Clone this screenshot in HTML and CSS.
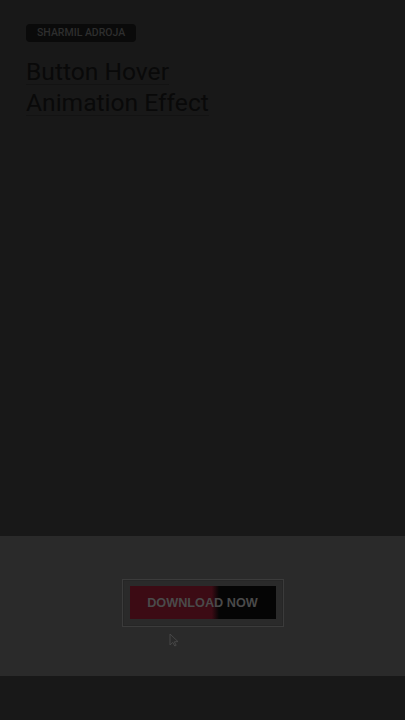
FILE: index.html
```html
<!DOCTYPE html>
<html lang="en">
<head>
    <meta charset="UTF-8">
    <meta name="viewport" content="width=device-width, initial-scale=1.0">
    <title>Button Hover Animation Effect</title>
    <link rel="stylesheet" href="styles.css">
</head>
<body>
    <div class="shot-header">
        <div class="author-row">
            <span class="author-badge">SHARMIL ADROJA</span>
        </div>
        <h1 class="shot-title"><a href="#">Button Hover Animation Effect</a></h1>
    </div>

    <div class="shot-media">
        <div class="btn-frame">
            <a href="#" class="download-btn">DOWNLOAD NOW</a>
        </div>
        <svg class="cursor" width="10" height="14" viewBox="0 0 10 14">
            <path d="M1 1 L1 12 L3.8 9.4 L5.8 13 L7.2 12.3 L5.3 8.8 L9 8.6 Z" fill="#2a2a2a" stroke="#474747" stroke-width="1"/>
        </svg>
    </div>

    <div class="shot-footer"></div>
</body>
</html>
```

FILE: styles.css
```css
* {
    margin: 0;
    padding: 0;
    box-sizing: border-box;
}

body {
    font-family: Roboto, "Liberation Sans", sans-serif;
    background: #181818;
    height: 720px;
    display: flex;
    flex-direction: column;
    overflow: hidden;
}

.shot-header {
    flex: 1;
    padding: 24px 26px 0;
}

.author-row {
    display: flex;
}

.author-badge {
    height: 18px;
    line-height: 18px;
    padding: 0 11px;
    background: #0a0a0a;
    color: #2e2e2e;
    font-size: 10.5px;
    font-weight: 500;
    border-radius: 4px;
}

.shot-title {
    margin-top: 14px;
    font-size: 24.6px;
    font-weight: 400;
    line-height: 31px;
    width: 220px;
}

.shot-title a {
    color: #090909;
    text-decoration: underline;
    text-decoration-color: #131313;
    text-decoration-thickness: 1px;
    text-underline-offset: 4px;
}

.shot-media {
    position: relative;
    height: 140px;
    background: #2a2a2a;
    display: flex;
    align-items: center;
    justify-content: center;
    padding-bottom: 6px;
}

.btn-frame {
    width: 162px;
    height: 48px;
    padding: 6px 7px 7px 7px;
    border: 1px solid #3b3b3b;
    box-shadow: inset 0 0 0 1px #262626;
}

.download-btn {
    display: flex;
    align-items: center;
    justify-content: center;
    height: 100%;
    font-family: "Liberation Sans", Arial, sans-serif;
    font-weight: 700;
    font-size: 12.7px;
    color: #4a4a4a;
    text-decoration: none;
    background: linear-gradient(90deg, #3c0b14 0%, #3c0b14 56%, #050505 61%, #050505 100%);
}

.cursor {
    position: absolute;
    left: 169px;
    top: 97px;
}

.shot-footer {
    height: 44px;
}
```
